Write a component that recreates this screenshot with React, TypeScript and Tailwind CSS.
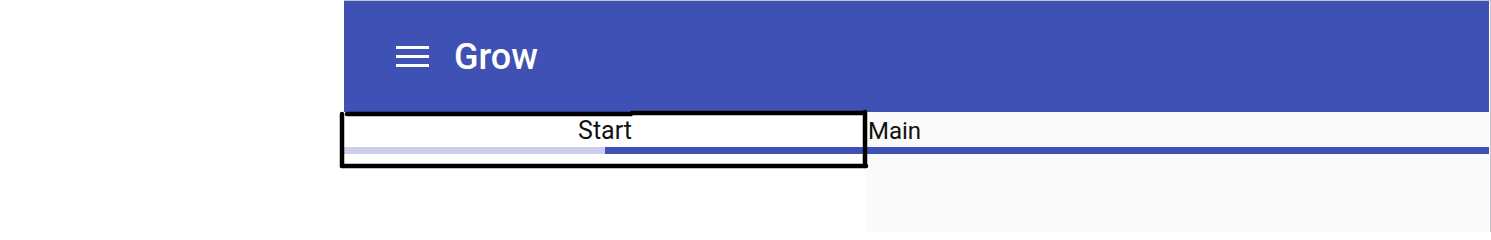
import React from "react";

export default function App() {
  return (
    <div
      className="relative flex h-[232px] w-[1491px] bg-white"
      style={{ fontFamily: "Roboto, 'Noto Sans', Arial, sans-serif" }}
    >
      <div className="w-[344px] shrink-0" />
      <div className="flex flex-1 flex-col border-t border-r border-[#c4c4c8] pr-px">
        <header className="flex h-[111px] items-center bg-[#3f51b5] pl-[52px]">
          <svg width="33" height="21" viewBox="0 0 33 21" className="shrink-0">
            <rect x="0" y="0" width="33" height="3" fill="#ffffff" />
            <rect x="0" y="9" width="33" height="3" fill="#ffffff" />
            <rect x="0" y="18" width="33" height="3" fill="#ffffff" />
          </svg>
          <span className="ml-[25px] text-[36px] leading-[36px] font-medium text-white">Grow</span>
        </header>
        <div className="flex flex-1">
          <div className="flex w-[522px] shrink-0 flex-col bg-white">
            <div className="flex h-[35px] justify-center pt-[7px] text-[25px] leading-[24px] text-[#111111]">
              Start
            </div>
            <div className="flex h-[7px]">
              <div className="flex-1 bg-[#cbcfeb]" />
              <div className="flex-1 bg-[#3f51b5]" />
            </div>
          </div>
          <div className="flex flex-1 flex-col bg-[#fafafa]">
            <div className="flex h-[35px] pl-[2px] pt-[7px] text-[24px] leading-[24px] text-[#111111]">
              Main
            </div>
            <div className="h-[7px] bg-[#3f51b5]" />
          </div>
        </div>
      </div>
      <svg
        className="pointer-events-none absolute left-0 top-0"
        width="1491"
        height="232"
        viewBox="0 0 1491 232"
      >
        <g stroke="#000000" strokeWidth="4.5" strokeLinecap="round" fill="none">
          <path d="M347 114 L631 114 L632 113 L863 113" />
          <path d="M342 114 L342 166" />
          <path d="M865 112 L865 166" />
          <path d="M342 166 L866 166" />
        </g>
      </svg>
    </div>
  );
}
